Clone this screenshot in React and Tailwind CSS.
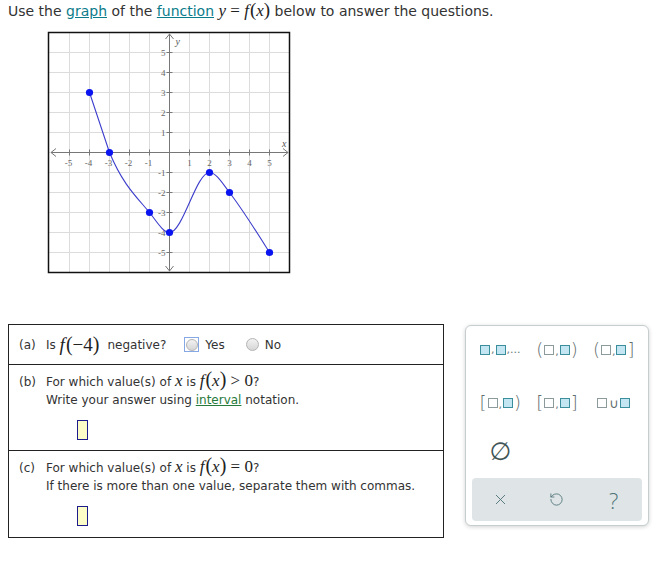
import React from 'react';
import { X, RotateCcw } from 'lucide-react';

const ox = 122.5;
const oy = 121.5;
const u = 20;
const px = (x) => ox + u * x;
const py = (y) => oy - u * y;
const c = (x1, y1, x2, y2, x, y) => `C${px(x1)},${py(y1)} ${px(x2)},${py(y2)} ${px(x)},${py(y)}`;

const points = [[-4, 3], [-3, 0], [-1, -3], [0, -4], [2, -1], [3, -2], [5, -5]];
const grid = [-5, -4, -3, -2, -1, 0, 1, 2, 3, 4, 5];
const ticks = [-5, -4, -3, -2, -1, 1, 2, 3, 4, 5];

const curve = [
  `M${px(-4)},${py(3)} L${px(-3)},${py(0)}`,
  c(-2.333, -1.6, -1.667, -2.2, -1, -3),
  c(-0.667, -3.4, -0.333, -4, 0, -4),
  c(0.667, -4, 1.333, -1, 2, -1),
  c(2.333, -1, 2.667, -1.567, 3, -2),
  c(3.667, -2.867, 4.333, -3.933, 5, -5),
].join(' ');

const Graph = () => (
  <svg width="245" height="244" className="block">
    {grid.map((g) => (
      <g key={g}>
        <line x1={px(g)} y1="2" x2={px(g)} y2="241" stroke="#dcdcdc" strokeWidth="1" />
        <line x1="2" y1={py(g)} x2="242" y2={py(g)} stroke="#dcdcdc" strokeWidth="1" />
      </g>
    ))}
    <line x1="4" y1={oy} x2="241" y2={oy} stroke="#777" strokeWidth="1" />
    <line x1={ox} y1="3" x2={ox} y2="240" stroke="#777" strokeWidth="1" />
    <polyline points={`9,${oy - 4} 4,${oy} 9,${oy + 4}`} fill="none" stroke="#777" />
    <polyline points={`236,${oy - 4} 241,${oy} 236,${oy + 4}`} fill="none" stroke="#777" />
    <polyline points={`${ox - 4},8 ${ox},3 ${ox + 4},8`} fill="none" stroke="#777" />
    <polyline points={`${ox - 4},235 ${ox},240 ${ox + 4},235`} fill="none" stroke="#777" />
    {ticks.map((t) => (
      <g key={t} fontFamily="'Liberation Serif', serif" fontSize="9" fill="#666">
        <line x1={px(t)} y1={oy - 3} x2={px(t)} y2={oy + 3} stroke="#777" />
        <line x1={ox - 3} y1={py(t)} x2={ox + 3} y2={py(t)} stroke="#777" />
        <text x={px(t) + (t < 0 ? -1 : 0)} y={oy + 13} textAnchor="middle">{t}</text>
        <text x={ox - 4} y={py(t) + 3} textAnchor="end">{t}</text>
      </g>
    ))}
    <text x={ox + 6} y="14" fontFamily="'Liberation Serif', serif" fontStyle="italic" fontSize="10" fill="#555">y</text>
    <text x="235" y={oy - 6} fontFamily="'Liberation Serif', serif" fontStyle="italic" fontSize="10" fill="#555">x</text>
    <path d={curve} fill="none" stroke="#3d3dcc" strokeWidth="1.1" />
    {points.map(([x, y]) => (
      <circle key={x} cx={px(x)} cy={py(y)} r="3.6" fill="#0a14f0" />
    ))}
    <rect x="1.5" y="1.5" width="241" height="240" fill="none" stroke="#111" strokeWidth="1.5" />
  </svg>
);

const M = ({ children, className = '' }) => (
  <span className={`font-['Liberation_Serif',serif] text-[#222] leading-[17px] ${className}`}>{children}</span>
);

const Fx = ({ arg, size = 'text-[17px]', paren = 'text-[20px]' }) => (
  <M className={size}>
    <i>f</i>
    <span className={`ml-[1px] leading-[17px] ${paren}`}>(</span>
    {arg}
    <span className={`leading-[17px] ${paren}`}>)</span>
  </M>
);

const AnswerBox = () => <div className="ml-[58px] mt-[11px] w-[11px] h-[20px] bg-[#fdfdc8] border border-[#1c1c8c]" />;

const Filled = () => <span className="inline-block w-[10px] h-[10px] bg-[#c4e6f2] border-[1.5px] border-[#3b8e9b]" />;
const Empty = () => <span className="inline-block w-[10px] h-[10px] bg-white border-[1.5px] border-[#8d9a9b]" />;
const P = ({ children }) => <span className="text-[18px] leading-none text-[#5f6d6e] font-light">{children}</span>;
const Comma = () => <span className="text-[11px] text-[#6a7a7b] self-end mb-[-1px]">,</span>;

const Interval = ({ l, r }) => (
  <div className="flex items-center gap-[1px]">
    <P>{l}</P>
    <Empty />
    <Comma />
    <Filled />
    <P>{r}</P>
  </div>
);

export default function App() {
  return (
    <div className="w-[665px] h-[563px] bg-white font-['DejaVu_Sans',sans-serif] text-[#333]">
      <p className="pl-[8px] pt-[1px] h-[21px] text-[14px] leading-[17px] text-[#333] whitespace-nowrap">
        Use the <span className="text-[#0c7c8a] underline">graph</span> of the{' '}
        <span className="text-[#0c7c8a] underline">function</span>{' '}
        <M className="text-[17px]"><i>y</i> = </M>
        <Fx arg={<i>x</i>} paren="text-[19px]" /> below to answer the questions.
      </p>

      <div className="ml-[47px] mt-[10px]">
        <Graph />
      </div>

      <div className="flex items-start mt-[49px]">
        <div className="ml-[8px] w-[436px] border border-[#222] text-[12px] text-[#333]">
          <div className="h-[40px] flex items-center pl-[10px] border-b border-[#222]">
            <span className="w-[27px]">(a)</span>
            <span>Is&nbsp;</span>
            <Fx arg={<span>−4</span>} size="text-[19px]" />
            <span className="ml-[8px]">negative?</span>
            <span className="ml-[18px] w-[15px] h-[15px] border border-[#86a9e6] flex items-center justify-center">
              <span className="w-[12px] h-[12px] rounded-full border border-[#b4b4b4] bg-gradient-to-b from-[#f2f2f2] to-[#d6d6d6]" />
            </span>
            <span className="ml-[6px]">Yes</span>
            <span className="ml-[21px] w-[13px] h-[13px] rounded-full border border-[#b4b4b4] bg-gradient-to-b from-[#f2f2f2] to-[#d6d6d6]" />
            <span className="ml-[6px]">No</span>
          </div>
          <div className="h-[86px] pl-[10px] pt-[6px] border-b border-[#222]">
            <div className="flex items-baseline h-[20px]">
              <span className="w-[27px]">(b)</span>
              <span>For which value(s) of&nbsp;</span>
              <M className="text-[17px]"><i>x</i></M>
              <span>&nbsp;is&nbsp;</span>
              <Fx arg={<i>x</i>} />
              <M className="text-[17px]">&nbsp;&gt; 0</M>
              <span>?</span>
            </div>
            <div className="pl-[27px] leading-[18px]">
              Write your answer using <span className="text-[#267a3a] underline">interval</span> notation.
            </div>
            <AnswerBox />
          </div>
          <div className="h-[86px] pl-[10px] pt-[6px]">
            <div className="flex items-baseline h-[20px]">
              <span className="w-[27px]">(c)</span>
              <span>For which value(s) of&nbsp;</span>
              <M className="text-[17px]"><i>x</i></M>
              <span>&nbsp;is&nbsp;</span>
              <Fx arg={<i>x</i>} />
              <M className="text-[17px]">&nbsp;= 0</M>
              <span>?</span>
            </div>
            <div className="pl-[27px] leading-[18px]">
              If there is more than one value, separate them with commas.
            </div>
            <AnswerBox />
          </div>
        </div>

        <div className="ml-[21px] mt-[1px] w-[184px] h-[201px] rounded-[6px] border border-[#c5cdce] shadow-[0_1px_4px_rgba(0,0,0,0.18)] bg-white px-[6px] flex flex-col">
          <div className="h-[48px] shrink-0 grid grid-cols-3 items-center justify-items-center">
            <div className="flex items-center gap-[1px]">
              <Filled />
              <Comma />
              <Filled />
              <span className="text-[11px] text-[#6a7a7b] self-end mb-[-1px]">,...</span>
            </div>
            <Interval l="(" r=")" />
            <Interval l="(" r="]" />
          </div>
          <div className="h-[58px] shrink-0 grid grid-cols-3 items-center justify-items-center">
            <Interval l="[" r=")" />
            <Interval l="[" r="]" />
            <div className="flex items-center gap-[2px]">
              <Empty />
              <span className="text-[13px] leading-none text-[#5f6d6e]">∪</span>
              <Filled />
            </div>
          </div>
          <div className="h-[38px] shrink-0 grid grid-cols-3 items-center justify-items-center">
            <span className="text-[25px] leading-none text-[#3f5556] font-medium">∅</span>
          </div>
          <div className="mt-[8px] h-[43px] shrink-0 rounded-[4px] bg-[#dfe5e6] grid grid-cols-3 items-center justify-items-center text-[#4f7479]">
            <X size={17} strokeWidth={1.3} />
            <RotateCcw size={15} strokeWidth={1.4} />
            <span className="text-[22px] leading-none font-light font-['Open_Sans',sans-serif]">?</span>
          </div>
        </div>
      </div>
    </div>
  );
}
